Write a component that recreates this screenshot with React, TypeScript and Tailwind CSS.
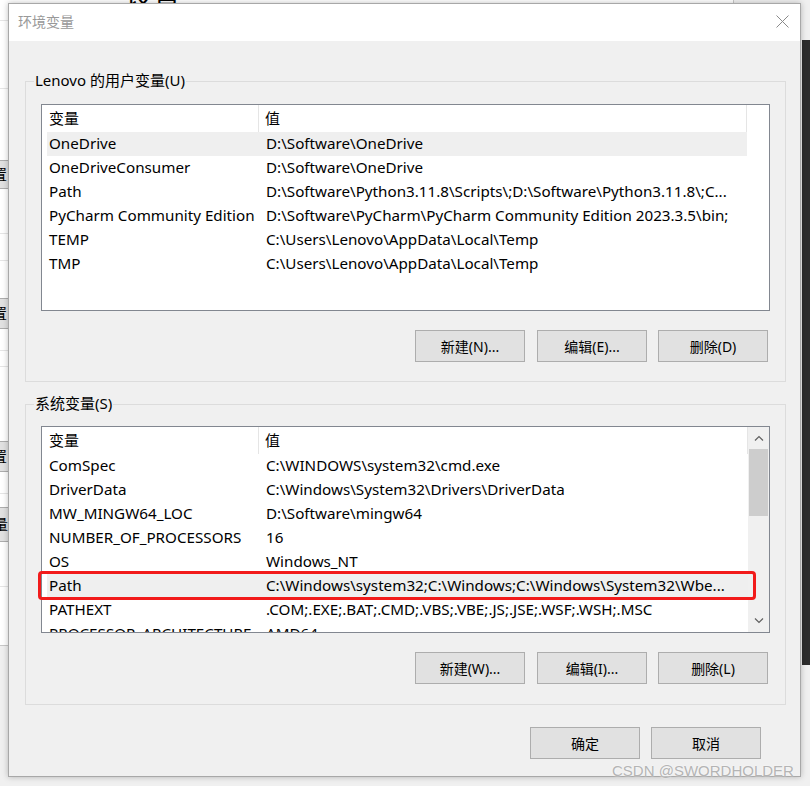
import React from 'react'

type Row = [string, string]

const userVars: Row[] = [
  ['OneDrive', 'D:\\Software\\OneDrive'],
  ['OneDriveConsumer', 'D:\\Software\\OneDrive'],
  ['Path', 'D:\\Software\\Python3.11.8\\Scripts\\;D:\\Software\\Python3.11.8\\;C...'],
  ['PyCharm Community Edition', 'D:\\Software\\PyCharm\\PyCharm Community Edition 2023.3.5\\bin;'],
  ['TEMP', 'C:\\Users\\Lenovo\\AppData\\Local\\Temp'],
  ['TMP', 'C:\\Users\\Lenovo\\AppData\\Local\\Temp']
]

const sysVars: Row[] = [
  ['ComSpec', 'C:\\WINDOWS\\system32\\cmd.exe'],
  ['DriverData', 'C:\\Windows\\System32\\Drivers\\DriverData'],
  ['MW_MINGW64_LOC', 'D:\\Software\\mingw64'],
  ['NUMBER_OF_PROCESSORS', '16'],
  ['OS', 'Windows_NT'],
  ['Path', 'C:\\Windows\\system32;C:\\Windows;C:\\Windows\\System32\\Wbe...'],
  ['PATHEXT', '.COM;.EXE;.BAT;.CMD;.VBS;.VBE;.JS;.JSE;.WSF;.WSH;.MSC'],
  ['PROCESSOR_ARCHITECTURE', 'AMD64']
]

const uiFont = "font-['Noto_Sans','Noto_Sans_CJK_SC',sans-serif]"

function Btn({ label, className = '' }: { label: string; className?: string }) {
  return (
    <div
      className={`w-[110px] h-[32px] flex items-center justify-center bg-[#e1e1e1] border border-[#adadad] text-[14px] text-black ${className}`}
    >
      {label}
    </div>
  )
}

function Chevron({ up }: { up?: boolean }) {
  return (
    <svg width="10" height="6" viewBox="0 0 10 6" className="block">
      <path
        d={up ? 'M1 5.5 L5 1.5 L9 5.5' : 'M1 0.5 L5 4.5 L9 0.5'}
        fill="none"
        stroke="#606060"
        strokeWidth="1.2"
      />
    </svg>
  )
}

function VarList({ rows, selected, scroll, mark }: { rows: Row[]; selected: number; scroll?: boolean; mark?: number }) {
  return (
    <div className="relative h-[207px] border border-[#828790] bg-white flex overflow-visible">
      <div className="flex-1 min-w-0 overflow-hidden">
        {/* 表头 */}
        <div className="flex h-[27px] text-[15px] leading-[20px]">
          <div className="w-[217px] pl-[7px] pb-[1px] flex items-center border-r border-[#e5e5e5]">变量</div>
          <div className="flex-1 pl-[6px] pb-[1px] flex items-center border-r border-[#e5e5e5]">值</div>
        </div>
        {rows.map(([k, v], i) => (
          <div
            key={k + i}
            className={`flex h-[24px] ml-[5px] pb-[2px] items-center text-[15.2px] leading-[20px] whitespace-nowrap ${i === selected ? 'bg-[#efefef]' : ''}`}
          >
            <div className="w-[212px] pl-[2px] overflow-hidden">{k}</div>
            <div className="flex-1 pl-[7px] overflow-hidden">{v}</div>
          </div>
        ))}
      </div>
      {scroll ? (
        <div className="w-[21px] bg-[#f0f0f0] flex flex-col">
          <div className="h-[22px] flex items-center justify-center">
            <Chevron up />
          </div>
          <div className="h-[67px] mx-[1px] bg-[#cdcdcd]" />
          <div className="flex-1" />
          <div className="h-[22px] flex items-center justify-center">
            <Chevron />
          </div>
        </div>
      ) : (
        <div className="w-[22px]" />
      )}
      {mark !== undefined && (
        <div
          className="absolute left-[-4px] w-[718px] h-[29px] border-[3px] border-[#f21b1b] rounded-[4px] pointer-events-none"
          style={{ top: 27 + mark * 24 - 3 }}
        />
      )}
    </div>
  )
}

function Group({ title, children, pt }: { title: string; children: React.ReactNode; pt: string }) {
  return (
    <fieldset className={`border border-[#dcdcdc] px-[15px] ${pt}`}>
      <legend className="ml-[-7px] px-[1px] text-[15px] leading-[18px] pb-[2px]">{title}</legend>
      {children}
    </fieldset>
  )
}

export default function App() {
  return (
    <div className={`relative w-[810px] h-[786px] overflow-hidden bg-[#f0f0f0] ${uiFont}`}>
      {/* 背后的设置窗口 */}
      <div className="absolute left-0 top-0 w-[734px] h-[646px] bg-white border-r border-b border-[#c8c8c8]">
        <div className="absolute left-[125px] top-[-26px] text-[28px] text-black">设置</div>
        <div className="absolute left-0 top-[20px] w-[40px] border-t border-[#e5e5e5]" />
        <div className="absolute left-0 top-[88px] w-[40px] border-t border-[#e5e5e5]" />
        <div className="absolute left-[-30px] top-[160px] w-[40px] h-[29px] bg-[#e1e1e1] border border-[#adadad] text-[15px] flex items-center justify-end pr-[2px]">设置</div>
        <div className="absolute left-0 top-[233px] w-[40px] border-t border-[#e5e5e5]" />
        <div className="absolute left-0 top-[260px] w-[40px] border-t border-[#e5e5e5]" />
        <div className="absolute left-[-30px] top-[298px] w-[40px] h-[31px] bg-[#e1e1e1] border border-[#adadad] text-[15px] flex items-center justify-end pr-[2px]">设置</div>
        <div className="absolute left-0 top-[350px] w-[40px] border-t border-[#e5e5e5]" />
        <div className="absolute left-0 top-[366px] w-[40px] border-t border-[#e5e5e5]" />
        <div className="absolute left-[-30px] top-[441px] w-[40px] h-[31px] bg-[#e1e1e1] border border-[#adadad] text-[15px] flex items-center justify-end pr-[2px]">设置</div>
        <div className="absolute left-0 top-[493px] w-[40px] border-t border-[#e5e5e5]" />
        <div className="absolute left-[-30px] top-[507px] w-[40px] h-[35px] bg-[#e1e1e1] border border-[#adadad] text-[15px] flex items-center justify-end pr-[1px]">变量</div>
        <div className="absolute left-0 top-[586px] w-[40px] border-t border-[#e5e5e5]" />
      </div>
      <div className="absolute right-0 top-[40px] w-[8px] h-[625px] bg-[#2d2d2d]" />

      {/* 环境变量 对话框 */}
      <div className="absolute left-[8px] top-[3px] w-[793px] h-[774px] flex flex-col bg-[#f0f0f0] border border-[#a8a8a8] shadow-[0_0_6px_rgba(0,0,0,0.25)]">
        <div className="h-[37px] bg-white flex items-center justify-between pl-[9px] pr-[11px] pb-[2px]">
          <span className="text-[14px] text-[#999999]">环境变量</span>
          <svg width="13" height="13" viewBox="0 0 13 13">
            <path d="M0.5 0.5 L12.5 12.5 M12.5 0.5 L0.5 12.5" stroke="#8a8a8a" strokeWidth="1" />
          </svg>
        </div>
        <div className="flex flex-col pl-[16px] pr-[14px] pt-[30px]">
          <Group title="Lenovo 的用户变量(U)" pt="pt-[13px] pb-[19px]">
            <VarList rows={userVars} selected={0} />
            <div className="mt-[19px] mr-[2px] flex justify-end gap-[11px]">
              <Btn label="新建(N)..." className="mr-[1px]" />
              <Btn label="编辑(E)..." />
              <Btn label="删除(D)" />
            </div>
          </Group>
          <div className="h-[12px]" />
          <Group title="系统变量(S)" pt="pt-[12px] pb-[20px]">
            <VarList rows={sysVars} selected={5} scroll mark={5} />
            <div className="mt-[19px] mr-[2px] flex justify-end gap-[11px]">
              <Btn label="新建(W)..." className="mr-[1px]" />
              <Btn label="编辑(I)..." />
              <Btn label="删除(L)" />
            </div>
          </Group>
          <div className="mt-[22px] pr-[25px] flex justify-end gap-[11px]">
            <Btn label="确定" />
            <Btn label="取消" />
          </div>
        </div>
      </div>

      {/* 水印 */}
      <div className="absolute left-[612px] top-[762px] font-['Liberation_Sans',sans-serif] text-[15px] leading-[17px] text-[#b4b4b4] [text-shadow:0_0_2px_#ffffff]">
        CSDN @SWORDHOLDER
      </div>
    </div>
  )
}
